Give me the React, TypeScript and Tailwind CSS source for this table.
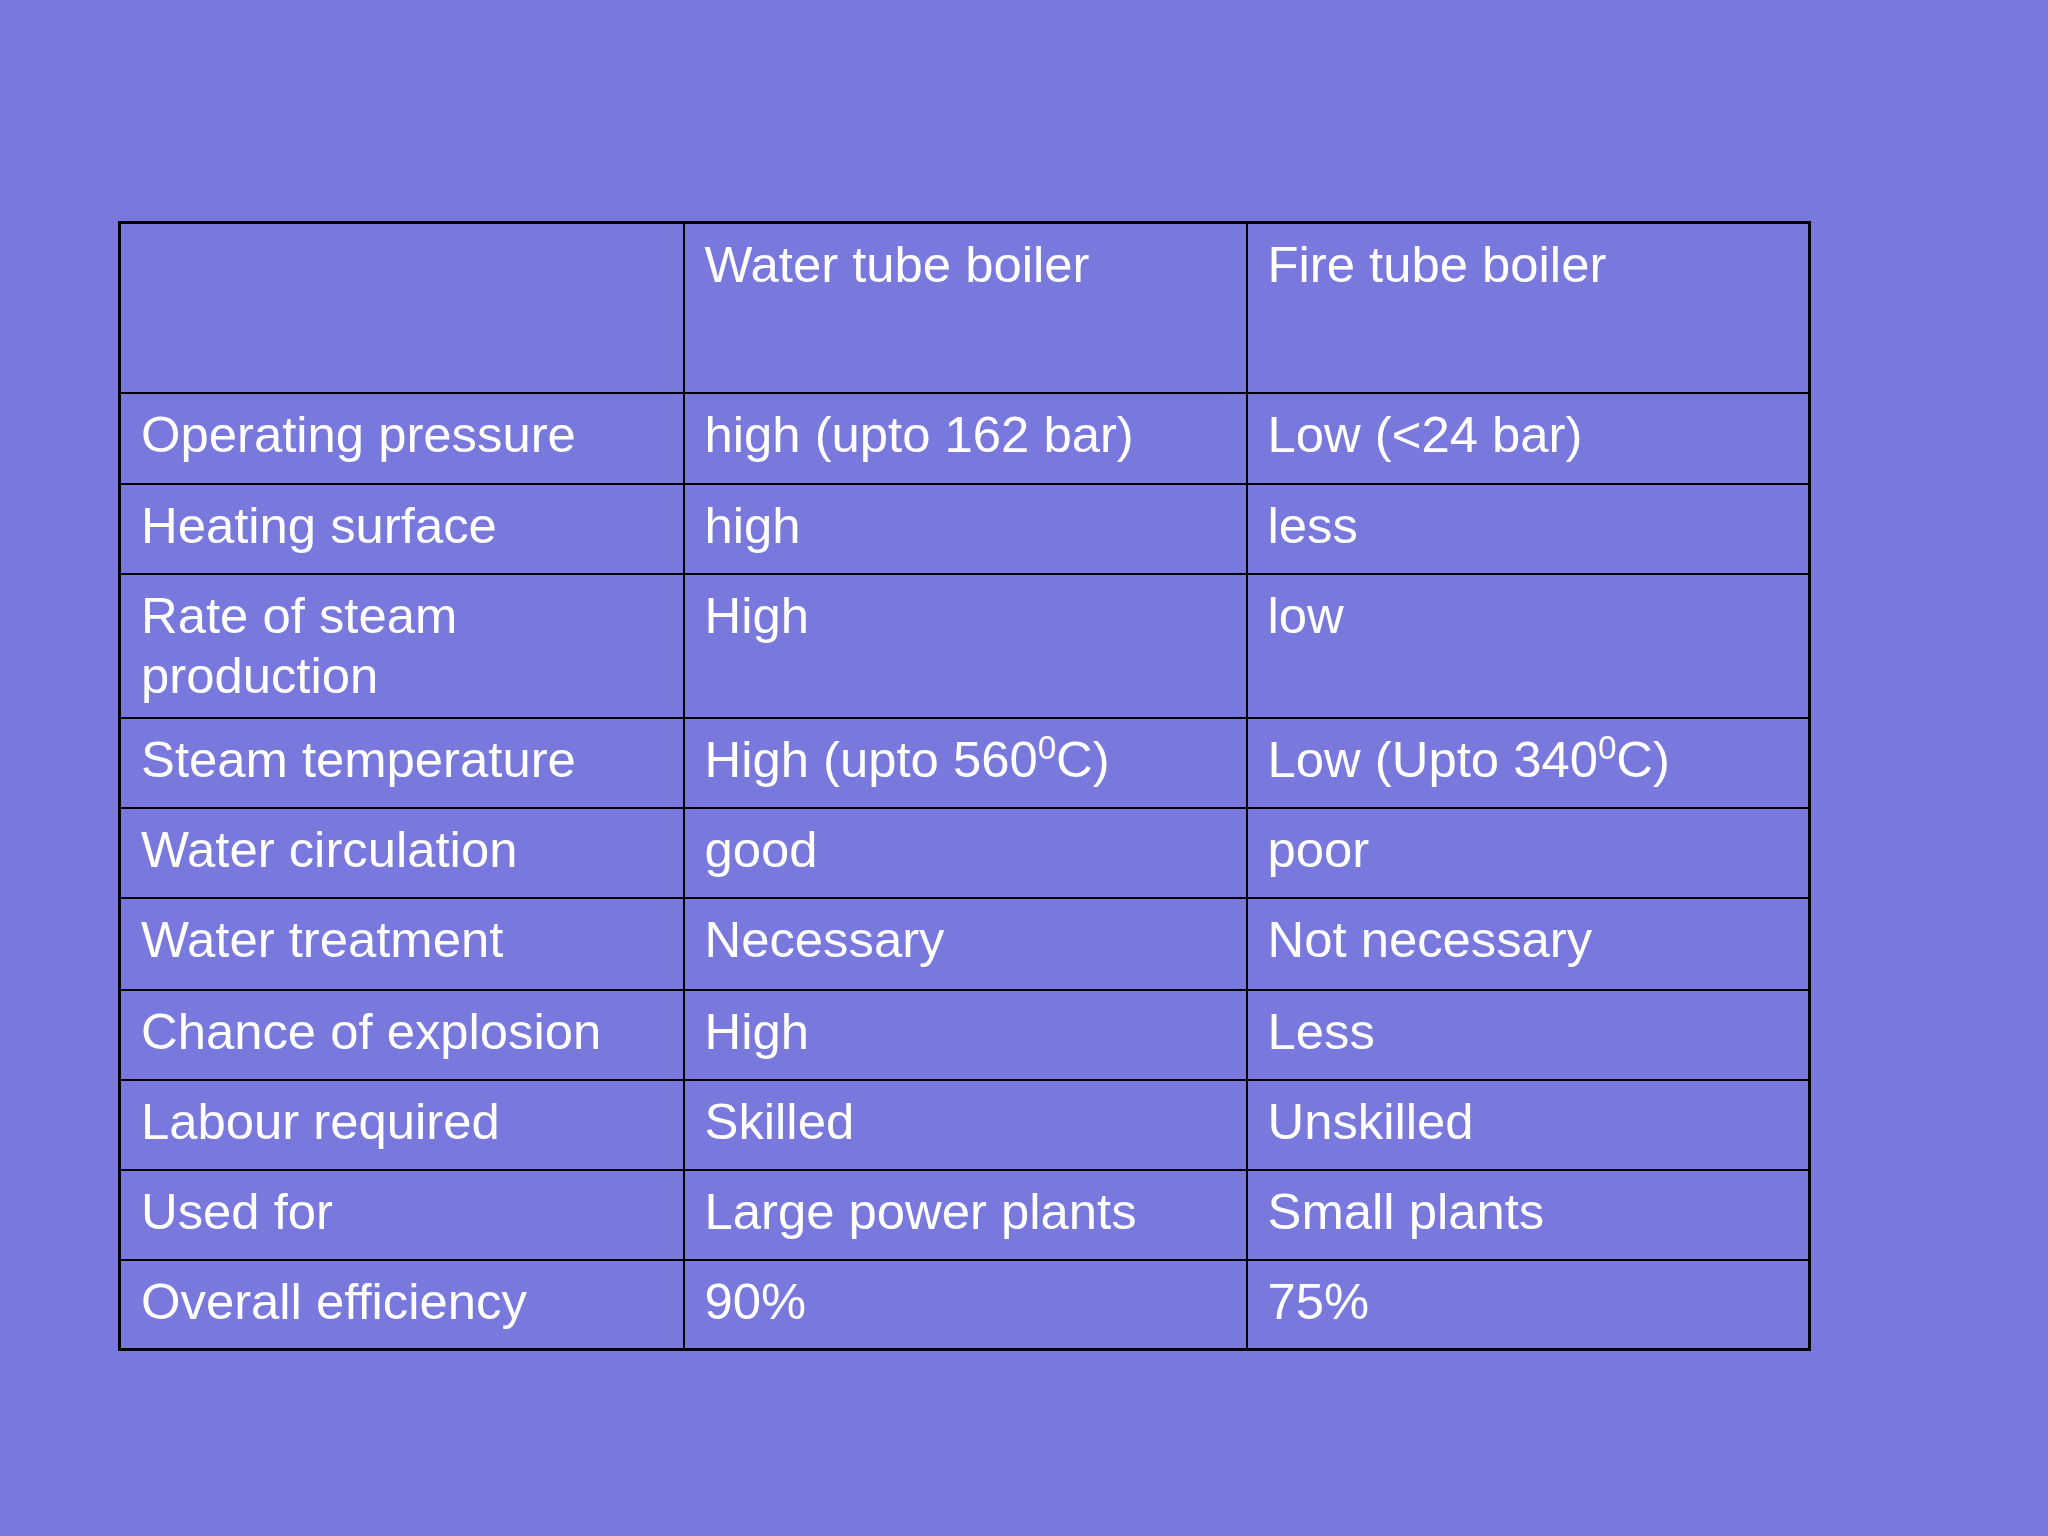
const rows: { label: string; water: React.ReactNode; fire: React.ReactNode; h: string }[] = [
  { label: "Operating pressure", water: "high (upto 162 bar)", fire: "Low (<24 bar)", h: "h-[91px]" },
  { label: "Heating surface", water: "high", fire: "less", h: "h-[90px]" },
  { label: "Rate of steam production", water: "High", fire: "low", h: "h-[144px]" },
  {
    label: "Steam temperature",
    water: (
      <>
        High (upto 560<sup className="text-[33px] -top-[18px]">0</sup>C)
      </>
    ),
    fire: (
      <>
        Low (Upto 340<sup className="text-[33px] -top-[18px]">0</sup>C)
      </>
    ),
    h: "h-[90px]",
  },
  { label: "Water circulation", water: "good", fire: "poor", h: "h-[90px]" },
  { label: "Water treatment", water: "Necessary", fire: "Not necessary", h: "h-[92px]" },
  { label: "Chance of explosion", water: "High", fire: "Less", h: "h-[90px]" },
  { label: "Labour required", water: "Skilled", fire: "Unskilled", h: "h-[90px]" },
  { label: "Used for", water: "Large power plants", fire: "Small plants", h: "h-[90px]" },
  { label: "Overall efficiency", water: "90%", fire: "75%", h: "h-[90px]" },
];

function Cell({ children }: { children?: React.ReactNode }) {
  return (
    <td className="border-2 border-black align-top pl-[20px] pr-4 pt-[11px] pb-0">
      {children}
    </td>
  );
}

function App() {
  return (
    <div className="min-h-screen w-full bg-[#7979dd] pt-[221px] pl-[118px]">
      <table
        className="table-fixed border-collapse border-[3px] border-black w-[1690px] text-white text-[50.8px] leading-[60px]"
        style={{ fontFamily: '"Liberation Sans", Arial, sans-serif' }}
      >
        <colgroup>
          <col className="w-[564px]" />
          <col className="w-[563px]" />
          <col className="w-[563px]" />
        </colgroup>
        <tbody>
          <tr className="h-[170px]">
            <Cell />
            <Cell>Water tube boiler</Cell>
            <Cell>Fire tube boiler</Cell>
          </tr>
          {rows.map((r) => (
            <tr key={r.label} className={r.h}>
              <Cell>{r.label}</Cell>
              <Cell>{r.water}</Cell>
              <Cell>{r.fire}</Cell>
            </tr>
          ))}
        </tbody>
      </table>
    </div>
  );
}

export default App;
